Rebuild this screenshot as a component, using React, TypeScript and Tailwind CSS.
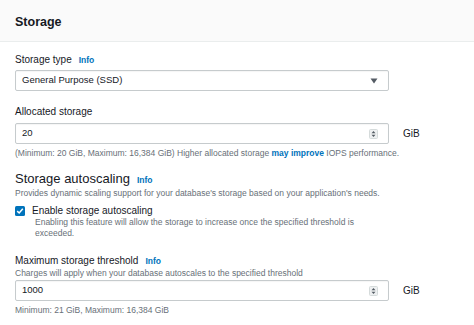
import { ReactNode } from "react";

function Info() {
  return <span className="ml-[7px] text-[8.5px] font-bold text-[#0073bb]">Info</span>;
}

function Spinner() {
  return (
    <svg width="9" height="10" viewBox="0 0 9 10" aria-hidden="true">
      <rect x="0.5" y="0.5" width="8" height="9" rx="1" fill="#eef0f1" stroke="#d5dbdb" />
      <path d="M2.5 4.2 L4.5 2 L6.5 4.2 Z" fill="#545b64" />
      <path d="M2.5 5.8 L4.5 8 L6.5 5.8 Z" fill="#545b64" />
    </svg>
  );
}

function Champ({ children, right }: { children: ReactNode; right?: ReactNode }) {
  return (
    <div className="flex h-[21px] w-[374px] items-center justify-between rounded-[2px] border border-[#c6cbcd] bg-white pl-[6px] pr-[10px] text-[9.5px] text-[#16191f] shadow-[inset_0_1px_1px_rgba(0,0,0,0.04)]">
      <span>{children}</span>
      {right}
    </div>
  );
}

export default function App() {
  return (
    <div
      className="h-[325px] w-[474px] overflow-hidden bg-white text-[#16191f]"
      style={{ fontFamily: '"Liberation Sans", Arial, sans-serif' }}
    >
      <div className="flex h-[42px] items-center border-b border-[#eaeded] bg-[#fafafa] pl-[15px] pt-[3px]">
        <h2 className="text-[12.5px] font-bold">Storage</h2>
      </div>

      <div className="pl-[15px] pt-[11px]">
        <div className="h-[14px] text-[10px] leading-[14px]">
          Storage type<Info />
        </div>
        <div className="mt-[3px]">
          <Champ
            right={
              <svg width="8" height="6" viewBox="0 0 8 6" aria-hidden="true">
                <path d="M0.5 0.5 L7.5 0.5 L4 5.5 Z" fill="#545b64" />
              </svg>
            }
          >
            General Purpose (SSD)
          </Champ>
        </div>

        <div className="mt-[14px] h-[14px] text-[10px] leading-[14px]">Allocated storage</div>
        <div className="mt-[4px] flex items-center gap-[14px]">
          <Champ right={<Spinner />}>20</Champ>
          <span className="text-[10px]">GiB</span>
        </div>
        <p className="mt-[3px] h-[12px] text-[8.5px] leading-[12px] text-[#687078]">
          (Minimum: 20 GiB, Maximum: 16,384 GiB) Higher allocated storage{" "}
          <span className="font-bold text-[#0073bb]">may improve</span> IOPS performance.
        </p>

        <h3 className="mt-[11px] h-[17px] text-[13px] leading-[17px]">
          Storage autoscaling<Info />
        </h3>
        <p className="h-[12px] text-[8.5px] leading-[12px] text-[#687078]">
          Provides dynamic scaling support for your database&apos;s storage based on your
          application&apos;s needs.
        </p>

        <div className="mt-[5px] flex items-start gap-[7px]">
          <span className="mt-[2px] flex size-[10px] shrink-0 items-center justify-center rounded-[1.5px] bg-[#0073bb]">
            <svg width="8" height="8" viewBox="0 0 8 8" aria-hidden="true">
              <path d="M1.2 4.1 L3.2 6 L6.8 1.8" fill="none" stroke="white" strokeWidth="1.5" />
            </svg>
          </span>
          <div>
            <div className="h-[13px] text-[10px] leading-[13px]">Enable storage autoscaling</div>
            <p className="w-[326px] pl-[3px] text-[8.5px] leading-[10.5px] text-[#687078]">
              Enabling this feature will allow the storage to increase once the specified
              threshold is exceeded.
            </p>
          </div>
        </div>

        <div className="mt-[16px] h-[14px] text-[10px] leading-[14px]">
          Maximum storage threshold<Info />
        </div>
        <p className="h-[11px] text-[8.5px] leading-[11px] text-[#687078]">
          Charges will apply when your database autoscales to the specified threshold
        </p>
        <div className="mt-[1px] flex items-center gap-[14px]">
          <Champ right={<Spinner />}>1000</Champ>
          <span className="text-[10px]">GiB</span>
        </div>
        <p className="mt-[3px] h-[12px] text-[8.5px] leading-[12px] text-[#687078]">
          Minimum: 21 GiB, Maximum: 16,384 GiB
        </p>
      </div>
    </div>
  );
}
